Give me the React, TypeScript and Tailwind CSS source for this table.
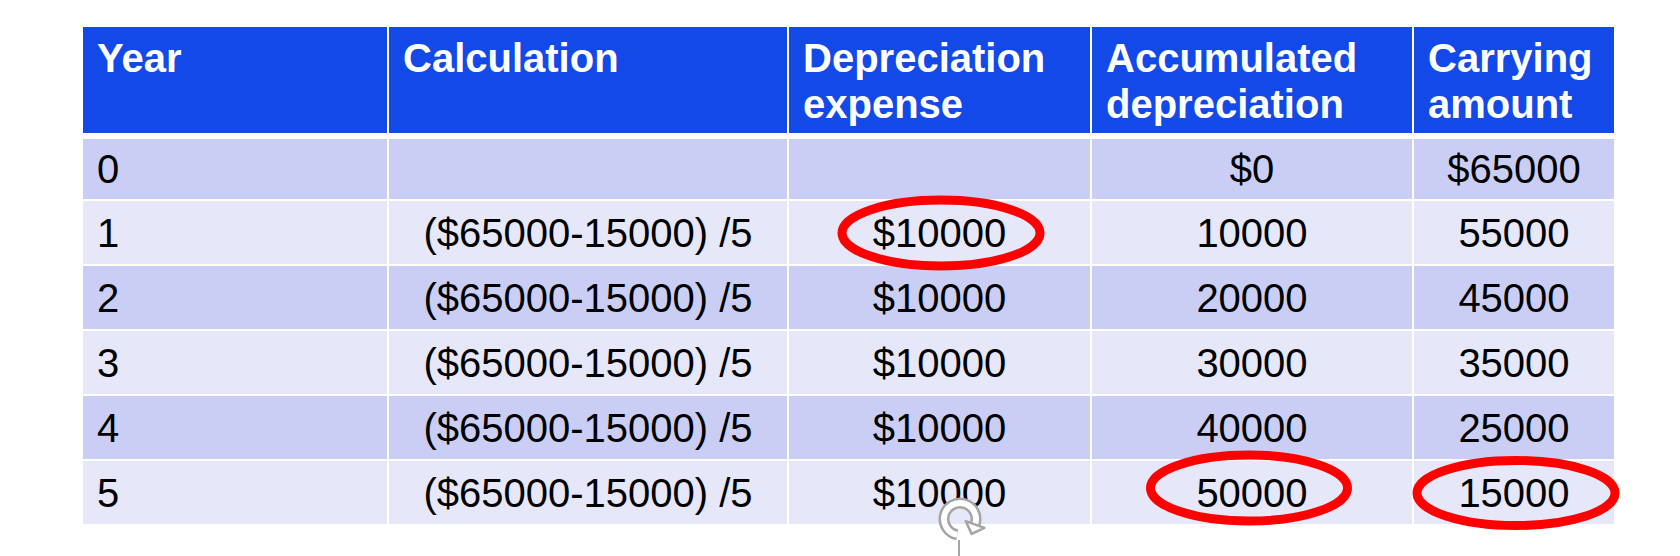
import React from 'react'

const headers = [
  ['Year'],
  ['Calculation'],
  ['Depreciation', 'expense'],
  ['Accumulated', 'depreciation'],
  ['Carrying', 'amount'],
]

const calc = '($65000-15000) /5'

const rows = [
  ['0', '', '', '$0', '$65000'],
  ['1', calc, '$10000', '10000', '55000'],
  ['2', calc, '$10000', '20000', '45000'],
  ['3', calc, '$10000', '30000', '35000'],
  ['4', calc, '$10000', '40000', '25000'],
  ['5', calc, '$10000', '50000', '15000'],
]

// red hand-drawn circles, keyed by "row-col"
const marks: Record<string, string> = {
  '1-2': 'w-[208px] h-[75px] left-[calc(50%+1.5px)] top-1/2',
  '5-3': 'w-[207px] h-[75px] left-[calc(50%-3.5px)] top-[calc(50%-5px)]',
  '5-4': 'w-[208px] h-[74px] left-[calc(50%+2px)] top-1/2',
}

function Mark({ className }: { className: string }) {
  return (
    <svg
      className={`absolute z-10 -translate-x-1/2 -translate-y-1/2 overflow-visible ${className}`}
      viewBox="0 0 208 75"
      preserveAspectRatio="none"
    >
      <ellipse cx="104" cy="37.5" rx="99" ry="33" fill="none" stroke="#ff0000" strokeWidth="9" />
    </svg>
  )
}

function RotateHandle() {
  return (
    <svg className="absolute left-[934px] top-[495px] z-20" width="60" height="62" viewBox="0 0 60 62">
      <path d="M23.22 39.76 A16 16 0 1 1 41.04 29.47" fill="none" stroke="#a5a5a5" strokeWidth="11" />
      <path d="M23.22 39.76 A16 16 0 1 1 41.04 29.47" fill="none" stroke="#ffffff" strokeWidth="6" />
      <polygon points="50.44,32.87 31.64,26.07 37.64,38.87" fill="#ffffff" stroke="#a5a5a5" strokeWidth="2.5" strokeLinejoin="round" />
      <line x1="25" y1="45" x2="25" y2="62" stroke="#a5a5a5" strokeWidth="2" />
    </svg>
  )
}

export default function App() {
  return (
    <div className="relative w-full h-[556px] overflow-hidden bg-white font-['Liberation_Sans',Arial,sans-serif] text-black">
      <div className="pt-[27px] pl-[83px]">
        <div className="grid grid-cols-[304px_398px_301px_320px_200px] gap-x-[2px] gap-y-[2px] w-max">
          {headers.map((lines, i) => (
            <div key={i} className="h-[106px] mb-[4px] bg-[#1249e8] pl-[14px] pt-[8px] text-white font-bold text-[40px] leading-[46px]">
              {lines.map(l => (
                <div key={l} className="whitespace-nowrap">{l}</div>
              ))}
            </div>
          ))}
          {rows.map((row, r) =>
            row.map((cell, c) => (
              <div
                key={`${r}-${c}`}
                className={`relative flex items-center text-[40px] leading-[46px] whitespace-nowrap ${
                  r === 0 ? 'h-[60px]' : 'h-[63px]'
                } ${r % 2 === 0 ? 'bg-[#cbcef4]' : 'bg-[#e6e7f9]'} ${
                  c === 0 ? 'pl-[14px]' : 'justify-center'
                }`}
              >
                {cell}
                {marks[`${r}-${c}`] && <Mark className={marks[`${r}-${c}`]} />}
              </div>
            ))
          )}
        </div>
      </div>
      <RotateHandle />
    </div>
  )
}
